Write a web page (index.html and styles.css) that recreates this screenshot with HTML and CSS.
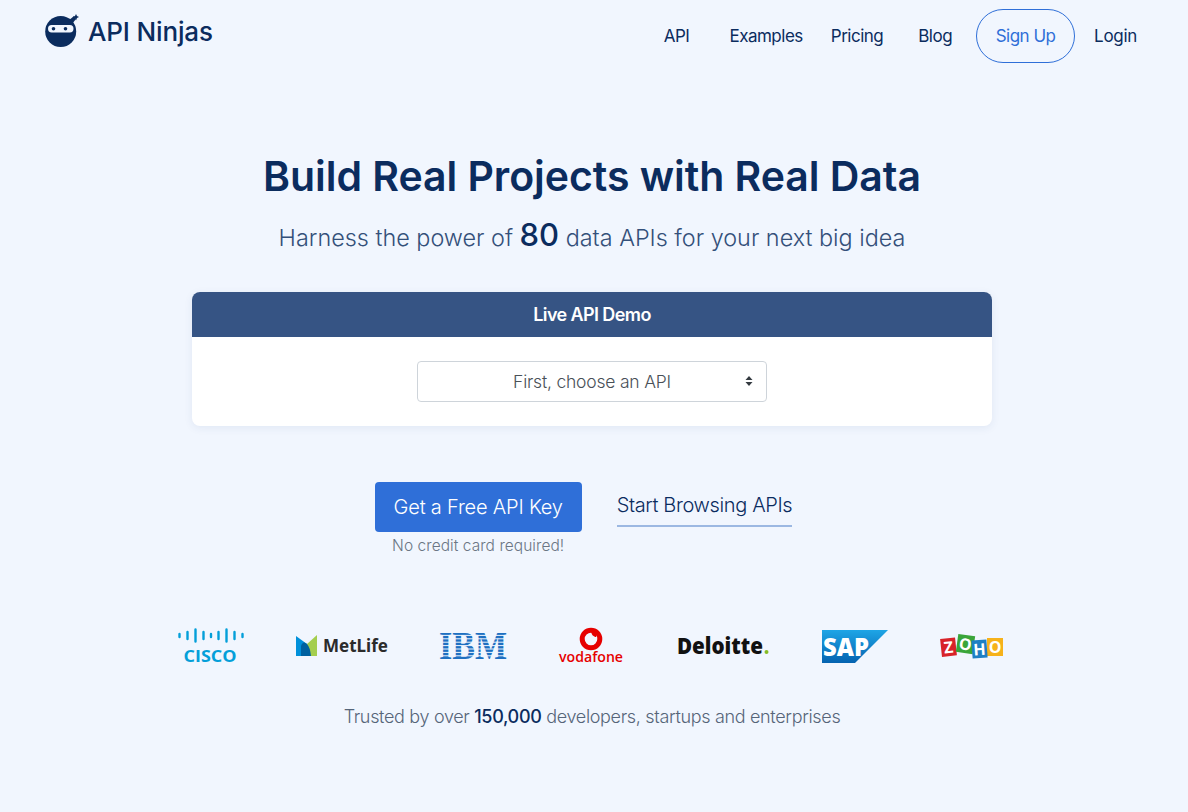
FILE: index.html
```html
<!DOCTYPE html>
<html lang="en">
<head>
  <meta charset="UTF-8">
  <meta name="viewport" content="width=device-width, initial-scale=1.0">
  <title>API Ninjas</title>
  <link rel="stylesheet" href="styles.css">
</head>
<body>

  <!-- Top navigation -->
  <nav class="navbar">
    <a class="brand" href="#">
      <svg class="brand-icon" viewBox="0 0 34 34" width="34" height="34">
        <circle cx="15.7" cy="17.5" r="15.5" fill="#0b2c5e"/>
        <path d="M23 7 L29 2 L31 5 L27 10 Z" fill="#0b2c5e"/>
        <path d="M31 0 L32 2 L34 3 L32 4 L31 6.500 L30 4 L28 3 L30 2 Z" fill="#0b2c5e"/>
        <rect x="3" y="11" width="25.500" height="7.500" rx="3.700" fill="#f1f6fe"/>
        <circle cx="8.500" cy="14.700" r="1.800" fill="#0b2c5e"/>
        <circle cx="20.500" cy="14.700" r="1.800" fill="#0b2c5e"/>
      </svg>
      <span>API Ninjas</span>
    </a>
    <div class="nav-links">
      <a class="nav-api" href="#">API</a>
      <a class="nav-examples" href="#">Examples</a>
      <a class="nav-pricing" href="#">Pricing</a>
      <a class="nav-blog" href="#">Blog</a>
      <a class="nav-signup" href="#">Sign Up</a>
      <a class="nav-login" href="#">Login</a>
    </div>
  </nav>

  <main class="hero">
    <h1>Build Real Projects with Real Data</h1>
    <p class="subtitle">Harness the power of <strong>80</strong> data APIs for your next big idea</p>

    <!-- Live demo card -->
    <section class="demo-card">
      <div class="demo-header">Live API Demo</div>
      <div class="demo-body">
        <div class="fake-select">
          <span>First, choose an API</span>
          <svg class="select-arrows" viewBox="0 0 8 12" width="8" height="12">
            <path d="M4 1 L7.500 5 L0.500 5 Z M4 11 L0.500 7 L7.500 7 Z" fill="#343a40"/>
          </svg>
        </div>
      </div>
    </section>

    <div class="cta-row">
      <div class="cta-main">
        <a class="cta-button" href="#">Get a Free API Key</a>
        <div class="cta-note">No credit card required!</div>
      </div>
      <a class="cta-link" href="#">Start Browsing APIs</a>
    </div>

    <!-- Customer logos -->
    <div class="logos">
      <svg class="logo" viewBox="0 0 66 36" width="66" height="36">
        <g stroke="#049fd9" stroke-width="2.400" stroke-linecap="round">
          <path d="M1.500 6v3M9.500 4v7M17.500 1.500v12M25.500 4v7M33 6v3M40.500 4v7M48.500 1.500v12M56.500 4v7M64.500 6v3"/>
        </g>
        <text x="32" y="34" class="logo-cisco" textLength="53" lengthAdjust="spacingAndGlyphs">CISCO</text>
      </svg>
      <svg class="logo" viewBox="0 0 92 36" width="92" height="36">
        <path d="M1 8 L12 16 V28 H1 Z" fill="#0090da"/>
        <path d="M22 7 V28 H12 V16 Z" fill="#a4ce4e"/>
        <path d="M6 28 V18 Q8 12 12 16 Q15 19 16 28 Z" fill="#0061a0"/>
        <text x="28" y="24" class="logo-metlife">MetLife</text>
      </svg>
      <svg class="logo" viewBox="0 0 68 36" width="68" height="36">
        <text x="34" y="31" class="logo-ibm" textLength="68" lengthAdjust="spacingAndGlyphs">IBM</text>
        <path d="M0 7.400H68M0 10.800H68M0 14.200H68M0 17.600H68M0 21H68M0 24.400H68M0 27.800H68" stroke="#f1f6fe" stroke-width="1"/>
      </svg>
      <svg class="logo" viewBox="0 0 67 36" width="67" height="36">
        <circle cx="33" cy="11" r="8.800" fill="none" stroke="#e60000" stroke-width="5"/>
        <path d="M33 2 C38 2 39 7 38 9 C36 9 33 7 33 2 Z" fill="#e60000"/>
        <text x="33" y="33.500" class="logo-vodafone" textLength="64" lengthAdjust="spacingAndGlyphs">vodafone</text>
      </svg>
      <svg class="logo" viewBox="0 0 94 36" width="94" height="36">
        <text x="0" y="26" class="logo-deloitte" textLength="86" lengthAdjust="spacingAndGlyphs">Deloitte</text>
        <circle cx="89.500" cy="24" r="2" fill="#86bc25"/>
      </svg>
      <svg class="logo" viewBox="0 0 66 33" width="66" height="33">
        <defs>
          <linearGradient id="sap-fill" x1="0" y1="0" x2="0" y2="1">
            <stop offset="0" stop-color="#1ea5e6"/>
            <stop offset="1" stop-color="#0563b0"/>
          </linearGradient>
        </defs>
        <path d="M0 0 H66 L33 33 H0 Z" fill="url(#sap-fill)"/>
        <text x="1" y="26" class="logo-sap" textLength="46" lengthAdjust="spacingAndGlyphs">SAP</text>
      </svg>
      <svg class="logo" viewBox="0 0 65 26" width="65" height="26">
        <g transform="rotate(-6 10 14)"><rect x="1" y="5" width="15" height="18" fill="#d8232a"/><text x="8.500" y="20" class="logo-zoho">Z</text></g>
        <g transform="rotate(8 25 11)"><rect x="17" y="2" width="17" height="18" fill="#3aa53a"/><text x="25.500" y="17" class="logo-zoho">O</text></g>
        <rect x="47" y="5" width="16" height="18" fill="#f6b21b"/><text x="55" y="20" class="logo-zoho">O</text>
        <g transform="rotate(-4 40 16)"><rect x="32" y="7" width="15" height="18" fill="#1f7fc4"/><text x="39.500" y="22" class="logo-zoho">H</text></g>
      </svg>
    </div>

    <p class="trusted">Trusted by over <strong>150,000</strong> developers, startups and enterprises</p>
  </main>

</body>
</html>
```

FILE: styles.css
```css
/* Overall Styling */
body {
  font-family: 'Inter', 'Lato', sans-serif;
  background-color: #f1f6fe;
  color: #0b2c5e;
  margin: 0;
  padding: 0;
  min-height: 812px;
}

a {
  color: inherit;
  text-decoration: none;
}

/* Navbar */
.navbar {
  display: flex;
  justify-content: space-between;
  align-items: flex-start;
  padding: 9px 51px 0 45px;
  height: 54px;
}

.brand {
  display: flex;
  align-items: center;
  gap: 9px;
  font-size: 26px;
  font-weight: 500;
  height: 44px;
  letter-spacing: -0.15px;
}

.nav-links {
  display: flex;
  align-items: center;
  height: 54px;
  font-size: 17px;
  letter-spacing: -0.5px;
}

.nav-api { margin-right: 40px; }
.nav-examples { margin-right: 28px; }
.nav-pricing { margin-right: 35px; }
.nav-blog { margin-right: 24px; }
.nav-login { letter-spacing: -0.3px; }

.nav-signup {
  box-sizing: border-box;
  width: 99px;
  height: 54px;
  line-height: 52px;
  text-align: center;
  color: #2f6fd8;
  border: 1px solid #2f6fd8;
  border-radius: 27px;
  margin-right: 19px;
}

/* Hero */
.hero {
  width: 1184px;
  display: flex;
  flex-direction: column;
  align-items: center;
}

h1 {
  font-size: 41px;
  font-weight: 600;
  line-height: 48px;
  margin: 89px 0 0;
  letter-spacing: -0.05px;
}

.subtitle {
  font-size: 23.400px;
  font-weight: 300;
  line-height: 38px;
  margin: 16px 0 0;
  color: #34507a;
}

.subtitle strong {
  font-size: 31px;
  font-weight: 500;
  color: #0b2c5e;
}

/* Demo card */
.demo-card {
  width: 800px;
  margin-top: 35px;
  background-color: #fff;
  border-radius: 8px;
  box-shadow: 0 2px 8px rgba(40, 70, 130, 0.08);
  overflow: hidden;
}

.demo-header {
  background-color: #365484;
  color: #fff;
  height: 45px;
  line-height: 45px;
  text-align: center;
  font-size: 18px;
  font-weight: 600;
  letter-spacing: -0.6px;
}

.demo-body {
  display: flex;
  justify-content: center;
  padding: 24px 0;
}

.fake-select {
  box-sizing: border-box;
  width: 350px;
  height: 41px;
  display: flex;
  align-items: center;
  justify-content: center;
  border: 1px solid #ced4da;
  border-radius: 4px;
  position: relative;
  font-size: 17.500px;
  font-weight: 300;
  color: #495057;
  letter-spacing: -0.2px;
}

.select-arrows {
  position: absolute;
  right: 13px;
  top: 13px;
}

/* Call to action */
.cta-row {
  display: flex;
  align-items: flex-start;
  gap: 35px;
  margin: 56px 17px 0 0;
}

.cta-main {
  display: flex;
  flex-direction: column;
  align-items: center;
}

.cta-button {
  box-sizing: border-box;
  width: 207px;
  height: 50px;
  line-height: 50px;
  text-align: center;
  background-color: #2f6fd8;
  color: #fff;
  border-radius: 4px;
  font-size: 20px;
  font-weight: 300;
  letter-spacing: -0.2px;
}

.cta-note {
  margin-top: 4px;
  font-size: 15.500px;
  font-weight: 300;
  color: #6b7684;
  letter-spacing: 0.05px;
}

.cta-link {
  margin-top: 7px;
  padding-bottom: 4px;
  font-size: 20px;
  font-weight: 300;
  line-height: 32px;
  color: #0b2c5e;
  border-bottom: 2px solid #9cb8e2;
  letter-spacing: -0.36px;
}

/* Logos */
.logos {
  display: flex;
  align-items: center;
  gap: 51.500px;
  margin: 72px 2px 0 0;
  height: 38px;
}

.logo {
  display: block;
  flex: none;
  overflow: visible;
}

.logos text {
  text-anchor: middle;
  font-family: 'Open Sans', sans-serif;
  font-weight: 700;
}

.logos .logo-cisco {
  font-size: 15.500px;
  fill: #049fd9;
}

.logos .logo-metlife {
  text-anchor: start;
  font-family: 'Noto Sans', sans-serif;
  font-size: 17px;
  fill: #2b2b2b;
}

.logos .logo-ibm {
  font-family: 'Liberation Serif', serif;
  font-size: 41px;
  fill: #1f70c1;
}

.logos .logo-vodafone {
  font-size: 14px;
  font-weight: 600;
  fill: #e60000;
}

.logos .logo-deloitte {
  text-anchor: start;
  font-size: 23px;
  font-weight: 800;
  fill: #111;
}

.logos .logo-sap {
  text-anchor: start;
  font-size: 24px;
  font-weight: 800;
  fill: #fff;
}

.logos .logo-zoho {
  font-size: 16px;
  fill: #fff;
}

.trusted {
  margin: 38px 0 0;
  font-size: 18px;
  font-weight: 300;
  line-height: 28px;
  color: #566579;
  letter-spacing: -0.33px;
}

.trusted strong {
  font-weight: 500;
  color: #0b2c5e;
}
```
